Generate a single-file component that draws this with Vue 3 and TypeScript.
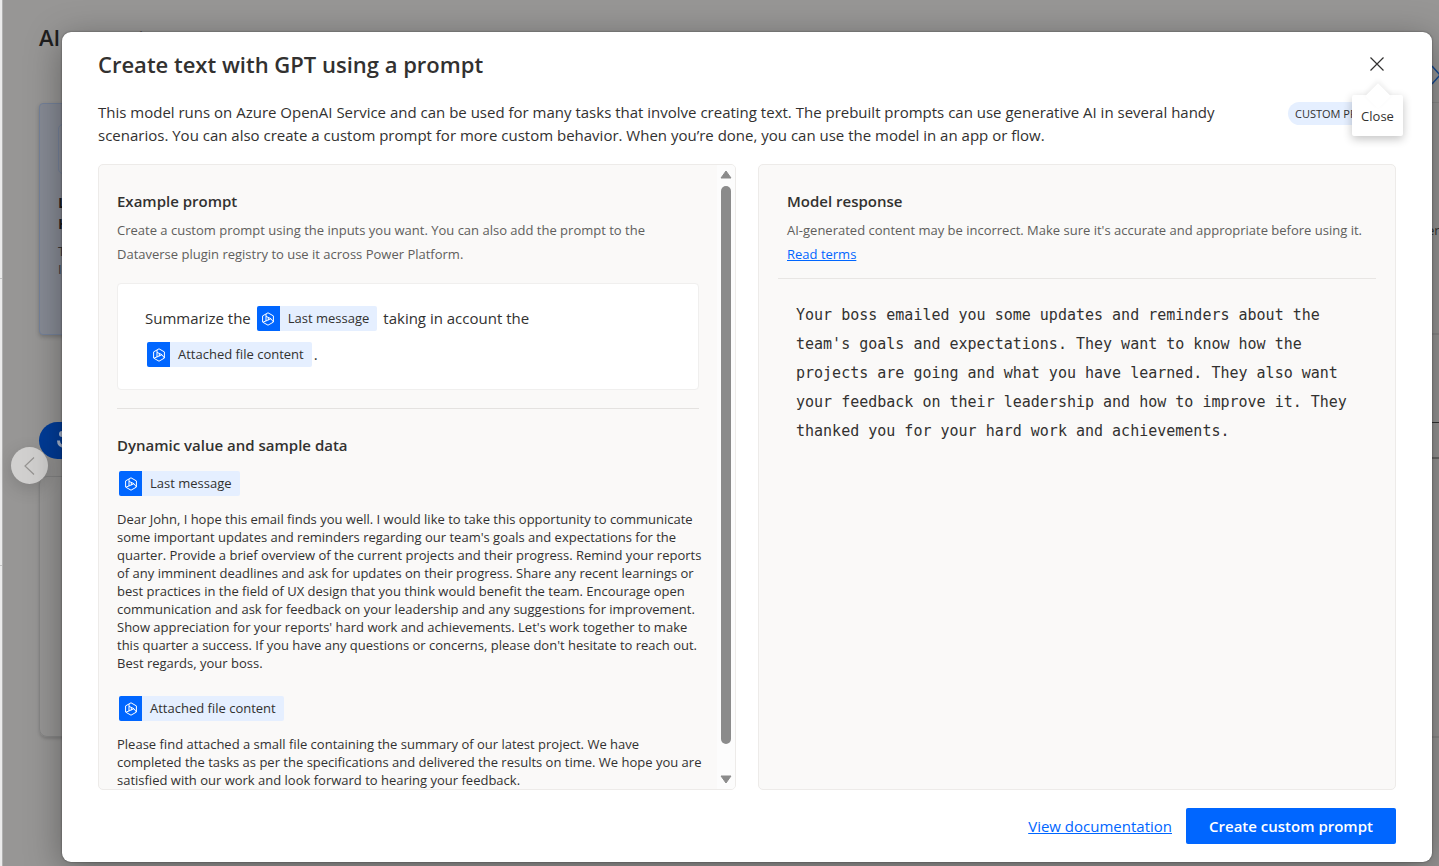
<script setup lang="ts">
interface Sample {
  name: string
  text: string
}

const introLines = [
  'This model runs on Azure OpenAI Service and can be used for many tasks that involve creating text. The prebuilt prompts can use generative AI in several handy',
  'scenarios. You can also create a custom prompt for more custom behavior. When you’re done, you can use the model in an app or flow.',
]

const samples: Sample[] = [
  {
    name: 'Last message',
    text: `Dear John, I hope this email finds you well. I would like to take this opportunity to communicate
some important updates and reminders regarding our team's goals and expectations for the
quarter. Provide a brief overview of the current projects and their progress. Remind your reports
of any imminent deadlines and ask for updates on their progress. Share any recent learnings or
best practices in the field of UX design that you think would benefit the team. Encourage open
communication and ask for feedback on your leadership and any suggestions for improvement.
Show appreciation for your reports' hard work and achievements. Let's work together to make
this quarter a success. If you have any questions or concerns, please don't hesitate to reach out.
Best regards, your boss.`,
  },
  {
    name: 'Attached file content',
    text: `Please find attached a small file containing the summary of our latest project. We have
completed the tasks as per the specifications and delivered the results on time. We hope you are
satisfied with our work and look forward to hearing your feedback.`,
  },
]

const response = `Your boss emailed you some updates and reminders about the
team's goals and expectations. They want to know how the
projects are going and what you have learned. They also want
your feedback on their leadership and how to improve it. They
thanked you for your hard work and achievements.`

// Hexagonal knot shown in front of every dynamic value
const knot =
  'M7 .8 12.4 3.9v6.2L7 13.2 1.6 10.1V3.9zM5 2v7.200M5 4.400 10 6.700M10 6.700 2 10.200M7.300 5.600v2.600M10 6.700l2.300 3.200'
</script>

<template>
  <div class="app">
    <div class="page" aria-hidden="true">
      <div class="rail"><div class="rail-block"></div><div class="rail-block"></div></div>
      <div class="canvas">
        <div class="page-title">AI prompts</div>
        <div class="card">
          <div class="thumb"></div>
          <div class="card-title">L<br />H</div>
          <div class="card-text">T<br />I</div>
        </div>
        <div class="step">
          <svg width="20" height="20" viewBox="0 0 20 20"><circle cx="6" cy="4" r="3" fill="#a9b7cf" /><path d="M2.500 10.500q0 6 7 6" fill="none" stroke="#a9b7cf" stroke-width="3" /></svg>
        </div>
        <div class="panel-back"></div>
      </div>
      <div class="right-edge">
        <svg width="12" height="20" viewBox="0 0 12 20"><path d="M5 1 13 10 5 19" fill="none" stroke="#174a92" stroke-width="1.5" /></svg>
        <div class="edge-card">er</div>
        <div class="edge-field"></div>
        <div class="edge-panel"></div>
      </div>
    </div>

    <div class="scrim">
      <button class="prev" type="button" aria-label="Previous">
        <svg width="12" height="18" viewBox="0 0 12 18"><path d="M10 .5 1 9l9 8.500" fill="none" stroke="#969492" stroke-width="1.200" /></svg>
      </button>

      <section class="dialog" role="dialog" aria-labelledby="dlg-title">
        <header class="head">
          <h1 id="dlg-title">Create text with GPT using a prompt</h1>
          <div class="close-wrap">
            <button class="close" type="button" aria-label="Close">
              <svg width="14" height="14" viewBox="0 0 14 14"><path d="M.5.5l13 13M13.500.5l-13 13" stroke="#323130" stroke-width="1.200" /></svg>
            </button>
            <div class="tip" role="tooltip">Close</div>
          </div>
        </header>

        <div class="intro">
          <p><span v-for="line in introLines" :key="line">{{ line }}</span></p>
          <span class="tag">CUSTOM PROMPT</span>
        </div>

        <div class="columns">
          <section class="pane prompt">
            <div class="prompt-body">
              <h2>Example prompt</h2>
              <p class="hint">Create a custom prompt using the inputs you want. You can also add the prompt to the<br />Dataverse plugin registry to use it across Power Platform.</p>
              <div class="example">
                <div class="row">
                  <span>Summarize the</span>
                  <span class="chip"><span class="chip-icon"><svg width="14" height="14" viewBox="0 0 14 14"><path :d="knot" /></svg></span><span class="chip-name">Last message</span></span>
                  <span>taking in account the</span>
                </div>
                <div class="row second">
                  <span class="chip"><span class="chip-icon"><svg width="14" height="14" viewBox="0 0 14 14"><path :d="knot" /></svg></span><span class="chip-name">Attached file content</span></span>
                  <span>.</span>
                </div>
              </div>
              <h2 class="samples-title">Dynamic value and sample data</h2>
              <div v-for="s in samples" :key="s.name" class="sample">
                <span class="chip"><span class="chip-icon"><svg width="14" height="14" viewBox="0 0 14 14"><path :d="knot" /></svg></span><span class="chip-name">{{ s.name }}</span></span>
                <p>{{ s.text }}</p>
              </div>
            </div>
            <div class="scrollbar" aria-hidden="true">
              <svg width="12" height="9" viewBox="0 0 12 9"><path d="M6 1 11 8H1z" fill="#8b8b8b" stroke="#8b8b8b" stroke-linejoin="round" /></svg>
              <div class="thumb-bar"></div>
              <svg width="12" height="9" viewBox="0 0 12 9"><path d="M6 8 11 1H1z" fill="#8b8b8b" stroke="#8b8b8b" stroke-linejoin="round" /></svg>
            </div>
          </section>

          <section class="pane answer">
            <div class="answer-head">
              <h2>Model response</h2>
              <p class="hint">AI-generated content may be incorrect. Make sure it's accurate and appropriate before using it.<br /><a href="#terms">Read terms</a></p>
            </div>
            <p class="output">{{ response }}</p>
          </section>
        </div>

        <footer class="foot">
          <a href="#docs">View documentation</a>
          <button class="primary" type="button">Create custom prompt</button>
        </footer>
      </section>
    </div>
  </div>
</template>

<style>
body {
  margin: 0;
}
</style>

<style scoped>
* {
  box-sizing: border-box;
}
h1, h2, p {
  margin: 0;
}
button {
  font: inherit;
  border: 0;
  padding: 0;
}
svg {
  display: block;
}
a {
  color: #0066ff;
}
.app {
  position: relative;
  height: 100vh;
  overflow: hidden;
  font-family: "Open Sans", "Noto Sans", sans-serif;
  color: #323130;
  background: #979695;
}
.page {
  display: flex;
  height: 100%;
}
.rail {
  width: 3px;
  background: #ebebeb;
  border-right: 1px solid #b0b0b0;
  display: flex;
  flex-direction: column;
}
.rail-block {
  height: 279px;
  border-bottom: 1px solid #c4c4c4;
}
.rail-block + .rail-block {
  height: 287px;
}
.canvas {
  flex: 1;
  padding: 23px 0 0 36px;
}
.page-title {
  font-size: 22px;
  line-height: 28px;
  font-weight: 600;
  color: #1f1e1e;
}
.card {
  width: 220px;
  height: 232px;
  margin-top: 52px;
  padding: 20px 18px;
  border: 1px solid #75829a;
  border-radius: 4px;
  background: #878b95;
  box-shadow: 0 2px 4px rgba(0, 0, 0, 0.2);
}
.thumb {
  width: 50px;
  height: 50px;
  border: 1px solid #75829a;
  border-radius: 5px;
}
.card-title {
  margin-top: 18px;
  font-size: 15px;
  line-height: 21px;
  font-weight: 700;
  color: #1f1e1e;
}
.card-text {
  margin-top: 8px;
  font-size: 13px;
  line-height: 18px;
  color: #3a3938;
}
.step {
  width: 60px;
  height: 37px;
  margin-top: 87px;
  padding: 8px 0 0 17px;
  border-radius: 20px;
  background: #003c98;
}
.panel-back {
  width: 200px;
  height: 261px;
  margin-top: 17px;
  border: 1px solid #868686;
  border-radius: 8px;
  box-shadow: 0 2px 3px rgba(0, 0, 0, 0.15);
}
.right-edge {
  width: 12px;
  padding-top: 65px;
}
.edge-card {
  height: 233px;
  margin-top: 17px;
  padding-top: 117px;
  border-top: 1px solid #8a8988;
  border-bottom: 2px solid #8a8988;
  font-size: 13px;
  line-height: 20px;
  text-align: right;
}
.edge-field {
  height: 37px;
  margin-top: 87px;
  border-top: 1px solid #333;
  border-bottom: 2px solid #6a6968;
}
.edge-panel {
  height: 279px;
  border-bottom: 2px solid #8a8988;
}
.scrim {
  position: absolute;
  inset: 0;
  padding: 32px 7px 4px 62px;
}
.prev {
  position: absolute;
  left: 11px;
  top: 447px;
  width: 37px;
  height: 37px;
  display: grid;
  place-items: center;
  border-radius: 50%;
  background: #d1d0cf;
  box-shadow: 0 5px 18px rgba(0, 0, 0, 0.16);
}
.dialog {
  position: relative;
  height: 100%;
  display: flex;
  flex-direction: column;
  padding: 15px 36px 18px;
  border-radius: 9px;
  background: #fff;
  box-shadow: 0 0 2px rgba(0, 0, 0, 0.5), 0 8px 36px rgba(0, 0, 0, 0.36);
}
.head {
  display: flex;
  justify-content: space-between;
  align-items: center;
  height: 34px;
}
h1 {
  font-size: 22px;
  line-height: 32px;
  font-weight: 600;
}
.close-wrap {
  position: relative;
}
.close {
  display: grid;
  place-items: center;
  width: 38px;
  height: 32px;
  background: none;
}
.tip {
  position: absolute;
  z-index: 2;
  top: 47px;
  left: -6px;
  width: 51px;
  height: 41px;
  font-size: 13px;
  line-height: 42px;
  text-align: center;
  background: #fff;
  border-radius: 2px;
  box-shadow: 0 3px 10px rgba(0, 0, 0, 0.24);
}
.tip::before {
  content: "";
  position: absolute;
  left: 17px;
  top: -8px;
  width: 18px;
  height: 18px;
  background: #fff;
  box-shadow: -2px -2px 5px rgba(0, 0, 0, 0.07);
  transform: rotate(45deg);
}
.intro {
  display: flex;
  justify-content: space-between;
  margin-top: 20px;
}
.intro p {
  font-size: 15px;
  line-height: 23px;
  white-space: nowrap;
}
.intro p span {
  display: block;
}
.tag {
  width: 108px;
  height: 23px;
  margin-top: 1px;
  padding-left: 7px;
  border-radius: 12px;
  font-size: 11px;
  line-height: 23px;
  white-space: nowrap;
  background: #e5efff;
}
.columns {
  flex: 1;
  min-height: 0;
  display: grid;
  grid-template-columns: 1fr 1fr;
  gap: 22px;
  margin-top: 17px;
}
.pane {
  min-width: 0;
  min-height: 0;
  overflow: hidden;
  border: 1px solid #edebe9;
  border-radius: 5px;
  background: #faf9f8;
}
.prompt {
  display: flex;
}
.prompt-body {
  flex: 1;
  min-width: 0;
  padding: 24px 18px 0;
}
h2 {
  font-size: 15px;
  line-height: 24px;
  font-weight: 600;
}
.hint {
  margin-top: 5px;
  font-size: 13px;
  line-height: 24px;
  white-space: nowrap;
  color: #605e5c;
}
.example {
  margin-top: 17px;
  padding: 21px 27px;
  height: 107px;
  border: 1px solid #f0efee;
  border-radius: 4px;
  background: #fff;
  font-size: 15px;
}
.row {
  display: flex;
  align-items: center;
  gap: 6px;
  line-height: 27px;
  white-space: nowrap;
}
.second {
  margin-top: 9px;
  padding-left: 2px;
  gap: 2px;
}
.chip {
  display: inline-flex;
  height: 25px;
  font-size: 13px;
  line-height: 25px;
  border-radius: 2px;
  overflow: hidden;
  background: #e5efff;
}
.chip-icon {
  width: 23px;
  display: grid;
  place-items: center;
  background: #0066ff;
}
.chip-icon path {
  fill: none;
  stroke: #fff;
  stroke-width: 1;
  stroke-linejoin: round;
}
.chip-name {
  padding: 0 8px;
}
.samples-title {
  margin-top: 18px;
  padding-top: 24px;
  border-top: 1px solid #e4e2e0;
}
.sample {
  margin-top: 14px;
}
.sample + .sample {
  margin-top: 24px;
}
.sample .chip {
  display: flex;
  width: max-content;
  margin-left: 2px;
}
.sample p {
  margin-top: 14px;
  font-size: 13px;
  line-height: 18px;
  white-space: pre;
}
.scrollbar {
  width: 18px;
  flex: none;
  display: flex;
  flex-direction: column;
  align-items: center;
  gap: 7px;
  padding: 5px 0;
  background: #fcfcfc;
}
.thumb-bar {
  flex: 1;
  width: 10px;
  margin-bottom: 24px;
  border-radius: 5px;
  background: #8b8b8b;
}
.answer {
  padding: 24px 19px;
}
.answer-head {
  padding: 0 0 12px 9px;
  border-bottom: 1px solid #e8e6e4;
}
.output {
  margin: 22px 0 0 18px;
  font-family: "DejaVu Sans Mono", monospace;
  font-size: 15px;
  line-height: 29px;
  white-space: pre;
}
.foot {
  display: flex;
  justify-content: flex-end;
  align-items: center;
  gap: 14px;
  margin-top: 18px;
  font-size: 15px;
}
.primary {
  width: 210px;
  height: 36px;
  border-radius: 2px;
  font-weight: 600;
  color: #fff;
  background: #0066ff;
}
</style>
